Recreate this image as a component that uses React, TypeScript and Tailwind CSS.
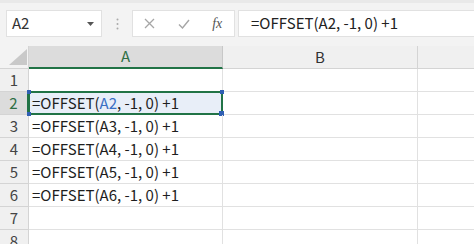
import React from 'react';

const font = { fontFamily: '"Noto Sans CJK JP", "Noto Sans", sans-serif' };

const rows = [
  { n: 1, text: '' },
  { n: 2, text: 'A2', active: true },
  { n: 3, text: 'A3' },
  { n: 4, text: 'A4' },
  { n: 5, text: 'A5' },
  { n: 6, text: 'A6' },
  { n: 7, text: '' },
  { n: 8, text: '' },
];

const Formula = ({ cell, colored }: { cell: string; colored?: boolean }) => (
  <span>
    =OFFSET(<span className={colored ? 'text-[#3a6fc4]' : ''}>{cell}</span>, -1, 0) +1
  </span>
);

export default function App() {
  return (
    <div className="w-[474px] h-[244px] overflow-hidden bg-white text-[#1e1e1e]" style={font}>
      {/* Formula bar */}
      <div className="h-[46px] bg-[#f3f3f3] border-t-[3px] border-[#e9e9e9] flex items-start pt-[7px]">
        <div className="ml-[6px] w-[96px] h-[27px] bg-white border border-[#e1e1e1] flex items-center justify-between pl-[5px] pr-[7px]">
          <span className="text-[15px] text-[#333]">A2</span>
          <svg width="7" height="4" viewBox="0 0 7 4"><path d="M0 0h7L3.5 4z" fill="#555" /></svg>
        </div>
        <div className="w-[30px] h-[27px] flex items-center justify-center">
          <svg width="3" height="12" viewBox="0 0 3 12">
            <circle cx="1.5" cy="1.5" r="1" fill="#aaa" />
            <circle cx="1.5" cy="6" r="1" fill="#aaa" />
            <circle cx="1.5" cy="10.5" r="1" fill="#aaa" />
          </svg>
        </div>
        <div className="w-[103px] h-[27px] bg-white border border-[#e1e1e1] flex items-center">
          <div className="w-[34px] flex justify-center">
            <svg width="11" height="11" viewBox="0 0 11 11"><path d="M1 1l9 9M10 1l-9 9" stroke="#a6a6a6" strokeWidth="1.3" /></svg>
          </div>
          <div className="w-[34px] flex justify-center">
            <svg width="12" height="10" viewBox="0 0 12 10"><path d="M1 5.5l3.5 3.5L11 1" stroke="#a6a6a6" strokeWidth="1.4" fill="none" /></svg>
          </div>
          <div className="w-[34px] flex justify-center">
            <span className="italic text-[14px] text-[#555]" style={{ fontFamily: '"Liberation Serif", serif' }}>fx</span>
          </div>
        </div>
        <div className="ml-[3px] flex-1 h-[27px] bg-white border border-[#e1e1e1] border-r-0 flex items-center pl-[12px]">
          <span className="text-[15px] text-[#222]"><Formula cell="A2" /></span>
        </div>
      </div>

      {/* Column headers */}
      <div className="flex h-[23px]">
        <div className="w-[29px] bg-[#f3f3f3] border-r border-b border-[#d4d4d4] flex items-end justify-end pb-[3px] pr-[1px]">
          <svg width="18" height="16" viewBox="0 0 18 16"><path d="M18 0v16H0z" fill="#c9c9c9" /></svg>
        </div>
        <div className="w-[194px] bg-[#dcdcdc] border-r border-[#c8c8c8] border-b-2 border-b-[#217346] flex items-center justify-center text-[15px] text-[#2f6f45]">
          A
        </div>
        <div className="w-[195px] bg-[#f0f0f0] border-r border-b border-[#d4d4d4] flex items-center justify-center text-[15px] text-[#333]">
          B
        </div>
        <div className="flex-1 bg-[#f0f0f0] border-b border-[#d4d4d4]" />
      </div>

      {/* Rows */}
      {rows.map((r) => (
        <div key={r.n} className="flex h-[23px]">
          <div
            className={`w-[29px] border-b border-[#d4d4d4] flex items-center justify-center text-[15px] ${
              r.active
                ? 'bg-[#dcdcdc] text-[#2f6f45] border-r-2 border-r-[#217346]'
                : 'bg-[#f0f0f0] text-[#444] border-r border-r-[#d4d4d4]'
            }`}
          >
            {r.n}
          </div>
          <div
            className={`relative w-[194px] border-r border-b border-[#e1e1e1] flex items-center pl-[3px] text-[15px] whitespace-nowrap ${
              r.active ? 'bg-[#e8eef8]' : ''
            }`}
          >
            {r.text && <Formula cell={r.text} colored={r.active} />}
            {r.active && (
              <div className="absolute -top-[1px] -left-[1px] -right-[1px] -bottom-[1px] border-2 border-[#217346] pointer-events-none">
                <div className="absolute -top-[3px] -left-[3px] w-[4px] h-[4px] bg-[#2f5fb3]" />
                <div className="absolute -top-[3px] -right-[3px] w-[4px] h-[4px] bg-[#2f5fb3]" />
                <div className="absolute -bottom-[3px] -left-[3px] w-[4px] h-[4px] bg-[#2f5fb3]" />
                <div className="absolute -bottom-[3px] -right-[3px] w-[5px] h-[5px] bg-[#2f5fb3]" />
              </div>
            )}
          </div>
          <div className="w-[195px] border-r border-b border-[#e1e1e1]" />
          <div className="flex-1 border-b border-[#e1e1e1]" />
        </div>
      ))}
    </div>
  );
}
